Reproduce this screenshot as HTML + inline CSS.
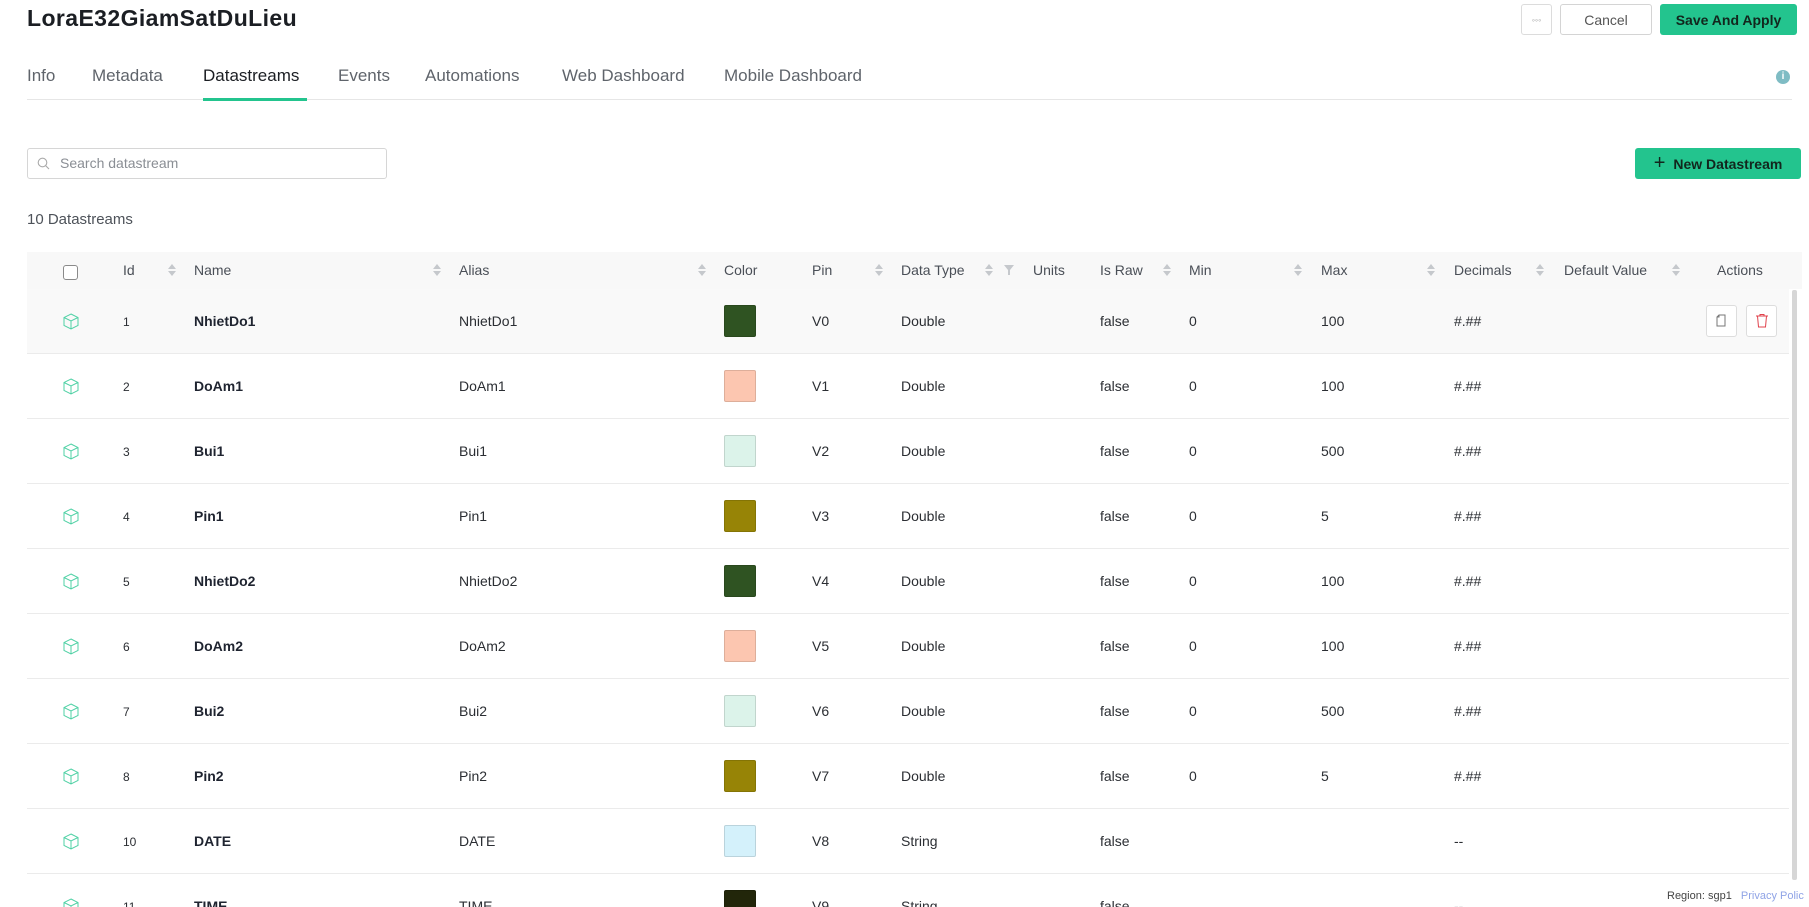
<!DOCTYPE html>
<html><head><meta charset="utf-8"><style>
*{box-sizing:border-box;margin:0;padding:0}
html,body{width:1809px;height:907px;overflow:hidden}
body{background:#fff;font-family:"Liberation Sans",sans-serif;color:#23262b}
#wrap{position:relative;width:1809px;height:907px;overflow:hidden}
.a{position:absolute;white-space:nowrap}
.tab{position:absolute;top:66px;font-size:17px;color:#5f646b}
.h{position:absolute;top:262px;font-size:14px;color:#4a4f57}
.sort{position:absolute;top:262px;width:8px;height:16px}
.sort:before{content:"";position:absolute;left:0;top:2px;border:4px solid transparent;border-bottom:5px solid #c5c8cc;border-top:0}
.sort:after{content:"";position:absolute;left:0;top:9px;border:4px solid transparent;border-top:5px solid #c5c8cc;border-bottom:0}
.row{position:absolute;left:27px;width:1762px;height:65px;border-bottom:1px solid #ebebeb}
.c{position:absolute;top:24px;font-size:14px;color:#2b2e33}
.sw{position:absolute;top:16px;left:697px;width:32px;height:32px;border-radius:2px;border:1px solid rgba(0,0,0,.12)}
.btn{position:absolute;border-radius:3px;font-size:14px;display:flex;align-items:center;justify-content:center}
</style></head><body><div id="wrap">
<div class="a" style="left:27px;top:5px;font-size:23px;font-weight:bold;color:#1b1e23;letter-spacing:0.4px">LoraE32GiamSatDuLieu</div>
<div class="btn" style="left:1521px;top:4px;width:31px;height:31px;border:1px solid #dcdcdc;color:#999;font-size:9px">◦◦◦</div>
<div class="btn" style="left:1560px;top:4px;width:92px;height:31px;border:1px solid #d4d4d4;color:#555">Cancel</div>
<div class="btn" style="left:1660px;top:4px;width:137px;height:31px;background:#23c48e;color:#12261d;font-weight:bold">Save And Apply</div>

<div class="tab" style="left:27px">Info</div>
<div class="tab" style="left:92px">Metadata</div>
<div class="tab" style="left:203px;color:#1b1e23">Datastreams</div>
<div class="tab" style="left:338px">Events</div>
<div class="tab" style="left:425px">Automations</div>
<div class="tab" style="left:562px">Web Dashboard</div>
<div class="tab" style="left:724px">Mobile Dashboard</div>
<div class="a" style="left:27px;top:99px;width:1765px;height:1px;background:#e6e6e6"></div>
<div class="a" style="left:203px;top:98px;width:104px;height:3px;background:#23c48e"></div>
<div class="a" style="left:1776px;top:70px;width:14px;height:14px;border-radius:50%;background:#7fbcc4;color:#fff;font-size:10px;font-weight:bold;text-align:center;line-height:14px">i</div>

<div class="a" style="left:27px;top:148px;width:360px;height:31px;border:1px solid #d6d6d6;border-radius:3px"></div>
<svg class="a" style="left:37px;top:157px" width="13" height="13" viewBox="0 0 13 13"><circle cx="5.5" cy="5.5" r="4.3" fill="none" stroke="#aaa" stroke-width="1.1"/><path d="M8.6 8.6L12 12" stroke="#aaa" stroke-width="1.1"/></svg>
<div class="a" style="left:60px;top:155px;font-size:14px;color:#8a8e94">Search datastream</div>
<div class="btn" style="left:1635px;top:148px;width:166px;height:31px;background:#23c48e;color:#12261d;font-weight:bold"><span style="font-size:20px;font-weight:normal;margin-right:8px">+</span>New Datastream</div>
<div class="a" style="left:27px;top:211px;font-size:15px;color:#4d5259">10 Datastreams</div>

<div class="a" style="left:27px;top:252px;width:1775px;height:37px;background:#f8f8f8"></div>
<div class="a" style="left:63px;top:265px;width:15px;height:15px;border:1px solid #8a8a8a;border-radius:3px;background:#fff"></div>
<div class="h" style="left:123px">Id</div><div class="sort" style="left:168px"></div>
<div class="h" style="left:194px">Name</div><div class="sort" style="left:433px"></div>
<div class="h" style="left:459px">Alias</div><div class="sort" style="left:698px"></div>
<div class="h" style="left:724px">Color</div>
<div class="h" style="left:812px">Pin</div><div class="sort" style="left:875px"></div>
<div class="h" style="left:901px">Data Type</div><div class="sort" style="left:985px"></div>
<svg class="a" style="left:1004px;top:265px" width="10" height="10"><path d="M0 0H10L6 5V10H4V5Z" fill="#c5c8cc"/></svg>
<div class="h" style="left:1033px">Units</div>
<div class="h" style="left:1100px">Is Raw</div><div class="sort" style="left:1163px"></div>
<div class="h" style="left:1189px">Min</div><div class="sort" style="left:1294px"></div>
<div class="h" style="left:1321px">Max</div><div class="sort" style="left:1427px"></div>
<div class="h" style="left:1454px">Decimals</div><div class="sort" style="left:1536px"></div>
<div class="h" style="left:1564px">Default Value</div><div class="sort" style="left:1672px"></div>
<div class="h" style="left:1717px">Actions</div>

<div id="rows"></div>
<div class="a" style="left:1792px;top:290px;width:5px;height:590px;background:#d6d6d6;border-radius:2px"></div>
<div class="a" style="left:1660px;top:888px;width:149px;height:19px;background:#fff"></div>
<div class="a" style="left:1667px;top:890px;font-size:11px;color:#444">Region: sgp1 <span style="color:#8fa3e6;margin-left:6px">Privacy Polic</span></div>
</div>
<script>
var d=[["1","NhietDo1","#2f5322","V0","Double","0","100","#.##"],["2","DoAm1","#fcc6b0","V1","Double","0","100","#.##"],["3","Bui1","#dcf3ea","V2","Double","0","500","#.##"],["4","Pin1","#978406","V3","Double","0","5","#.##"],["5","NhietDo2","#2f5322","V4","Double","0","100","#.##"],["6","DoAm2","#fcc6b0","V5","Double","0","100","#.##"],["7","Bui2","#dcf3ea","V6","Double","0","500","#.##"],["8","Pin2","#978406","V7","Double","0","5","#.##"],["10","DATE","#d4f1fb","V8","String","","","--"],["11","TIME","#22260a","V9","String","","","--"]];
var cube='<svg width="16" height="17" viewBox="0 0 16 17" style="position:absolute;left:36px;top:24px"><path d="M8 1L15 4.5V12.5L8 16L1 12.5V4.5Z M1 4.5L8 8L15 4.5 M8 8V16" fill="none" stroke="#4fd1a5" stroke-width="1"/></svg>';
var h='';
d.forEach(function(r,i){
var t=288.5+i*65;
h+='<div class="row" style="top:'+t+'px;'+(i==0?'background:#f9f9f9':'')+'">'+cube+
'<div class="c" style="left:96px;font-size:12px;top:26px">'+r[0]+'</div>'+
'<div class="c" style="left:167px;font-weight:bold;color:#1f2430">'+r[1]+'</div>'+
'<div class="c" style="left:432px">'+r[1]+'</div>'+
'<div class="sw" style="background:'+r[2]+'"></div>'+
'<div class="c" style="left:785px">'+r[3]+'</div>'+
'<div class="c" style="left:874px">'+r[4]+'</div>'+
'<div class="c" style="left:1073px">false</div>'+
'<div class="c" style="left:1162px">'+r[5]+'</div>'+
'<div class="c" style="left:1294px">'+r[6]+'</div>'+
'<div class="c" style="left:1427px">'+r[7]+'</div>'+
(i==0?'<div style="position:absolute;left:1679px;top:16px;width:31px;height:32px;border:1px solid #ddd;border-radius:3px;background:#fff"><svg width="12" height="14" style="position:absolute;left:9px;top:8px"><path d="M3 1H9V12H1V3Z M1 3H3V1" fill="none" stroke="#777" stroke-width="1"/></svg></div><div style="position:absolute;left:1719px;top:16px;width:31px;height:32px;border:1px solid #ddd;border-radius:3px;background:#fff"><svg width="12" height="14" style="position:absolute;left:9px;top:8px"><path d="M0 2H12 M4 2V0.5H8V2 M1.5 2L2.5 13H9.5L10.5 2" fill="none" stroke="#e0414b" stroke-width="1"/></svg></div>':'')+
'</div>';});
document.getElementById('rows').innerHTML=h;
</script>
</body></html>
